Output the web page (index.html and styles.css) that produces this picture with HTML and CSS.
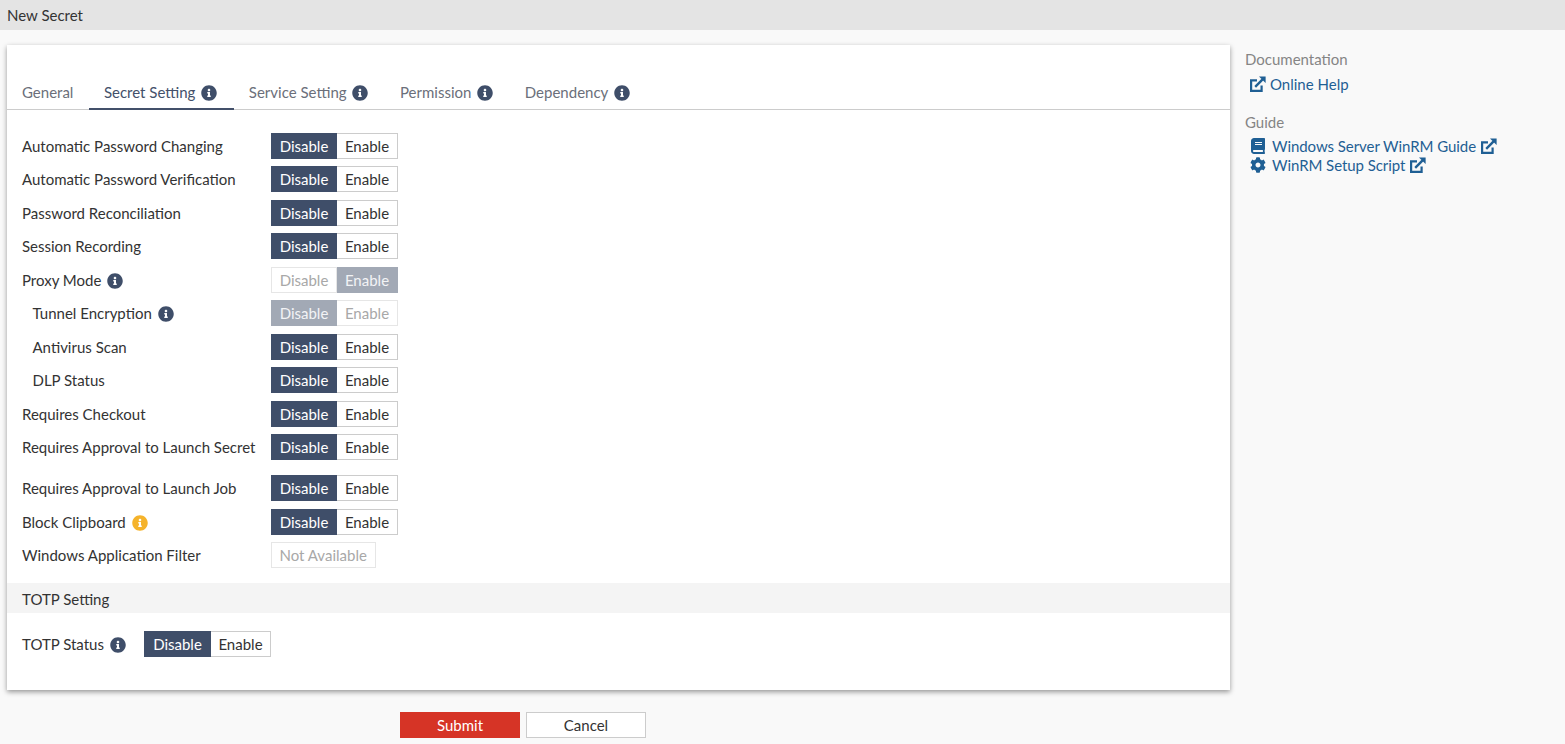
FILE: index.html
```html
<!DOCTYPE html>
<html lang="en">
<head>
    <meta charset="UTF-8">
    <title>New Secret</title>
    <link rel="stylesheet" href="styles.css">
</head>
<body>
    <svg class="icon-defs" aria-hidden="true">
        <symbol id="i-info" viewBox="0 0 512 512"><path d="M256 8C119.043 8 8 119.083 8 256c0 136.997 111.043 248 248 248s248-111.003 248-248C504 119.083 392.957 8 256 8zm0 110c23.196 0 42 18.804 42 42s-18.804 42-42 42-42-18.804-42-42 18.804-42 42-42zm56 254c0 6.627-5.373 12-12 12h-88c-6.627 0-12-5.373-12-12v-24c0-6.627 5.373-12 12-12h12v-64h-12c-6.627 0-12-5.373-12-12v-24c0-6.627 5.373-12 12-12h64c6.627 0 12 5.373 12 12v100h12c6.627 0 12 5.373 12 12v24z"/></symbol>
        <symbol id="i-ext" viewBox="0 0 16 16"><path d="M7 4.4H1.1v10.5h10.5V9.5" fill="none" stroke="currentColor" stroke-width="2.2"/><path d="M5.2 10.8L13.6 2.4" fill="none" stroke="currentColor" stroke-width="2.4"/><path d="M9 0.4h6.6V7z"/></symbol>
        <symbol id="i-book" viewBox="0 0 448 512"><path d="M448 360V24c0-13.3-10.7-24-24-24H96C43 0 0 43 0 96v320c0 53 43 96 96 96h328c13.3 0 24-10.7 24-24v-16c0-7.5-3.5-14.3-8.9-18.7-4.2-15.4-4.2-59.3 0-74.7 5.4-4.3 8.9-11.1 8.9-18.6zM128 134c0-3.3 2.7-6 6-6h212c3.3 0 6 2.7 6 6v20c0 3.3-2.7 6-6 6H134c-3.3 0-6-2.7-6-6v-20zm0 64c0-3.3 2.7-6 6-6h212c3.3 0 6 2.7 6 6v20c0 3.3-2.7 6-6 6H134c-3.3 0-6-2.7-6-6v-20zm253.4 250H96c-17.7 0-32-14.3-32-32 0-17.6 14.4-32 32-32h285.4c-1.9 17.1-1.9 46.9 0 64z"/></symbol>
        <symbol id="i-cog" viewBox="0 0 512 512"><path d="M487.4 315.7l-42.6-24.6c4.3-23.2 4.3-47 0-70.2l42.6-24.6c4.9-2.8 7.1-8.6 5.5-14-11.1-35.6-30-67.8-54.7-94.6-3.8-4.1-10-5.1-14.8-2.3L380.8 110c-17.9-15.4-38.5-27.3-60.8-35.1V25.8c0-5.6-3.9-10.5-9.4-11.7-36.7-8.2-74.3-7.8-109.2 0-5.5 1.2-9.4 6.1-9.4 11.7V75c-22.2 7.9-42.8 19.8-60.8 35.1L88.7 85.5c-4.9-2.8-11-1.9-14.8 2.3-24.7 26.7-43.6 58.9-54.7 94.6-1.7 5.4.6 11.2 5.5 14L67.3 221c-4.3 23.2-4.3 47 0 70.2l-42.6 24.6c-4.9 2.8-7.1 8.6-5.5 14 11.1 35.6 30 67.8 54.7 94.6 3.8 4.1 10 5.1 14.8 2.3l42.6-24.6c17.9 15.4 38.5 27.3 60.8 35.1v49.2c0 5.6 3.9 10.5 9.4 11.7 36.7 8.2 74.3 7.8 109.2 0 5.5-1.2 9.4-6.1 9.4-11.7v-49.2c22.2-7.9 42.8-19.8 60.8-35.1l42.6 24.6c4.9 2.8 11 1.9 14.8-2.3 24.7-26.7 43.6-58.9 54.7-94.6 1.5-5.5-.7-11.3-5.6-14.1zM256 336c-44.1 0-80-35.9-80-80s35.9-80 80-80 80 35.9 80 80-35.9 80-80 80z"/></symbol>
    </svg>

    <div class="title-bar">New Secret</div>

    <div class="page">
        <div class="main">
            <div class="card">
                <div class="tabs">
                    <div class="tab">General</div>
                    <div class="tab active">Secret Setting <svg class="info"><use href="#i-info"/></svg></div>
                    <div class="tab">Service Setting <svg class="info"><use href="#i-info"/></svg></div>
                    <div class="tab">Permission <svg class="info"><use href="#i-info"/></svg></div>
                    <div class="tab">Dependency <svg class="info"><use href="#i-info"/></svg></div>
                </div>

                <div class="form">
                    <div class="row">
                        <div class="label">Automatic Password Changing</div>
                        <div class="toggle"><span class="opt on">Disable</span><span class="opt">Enable</span></div>
                    </div>
                    <div class="row">
                        <div class="label">Automatic Password Verification</div>
                        <div class="toggle"><span class="opt on">Disable</span><span class="opt">Enable</span></div>
                    </div>
                    <div class="row">
                        <div class="label">Password Reconciliation</div>
                        <div class="toggle"><span class="opt on">Disable</span><span class="opt">Enable</span></div>
                    </div>
                    <div class="row">
                        <div class="label">Session Recording</div>
                        <div class="toggle"><span class="opt on">Disable</span><span class="opt">Enable</span></div>
                    </div>
                    <div class="row">
                        <div class="label">Proxy Mode <svg class="info"><use href="#i-info"/></svg></div>
                        <div class="toggle disabled"><span class="opt">Disable</span><span class="opt on">Enable</span></div>
                    </div>
                    <div class="row sub">
                        <div class="label">Tunnel Encryption <svg class="info"><use href="#i-info"/></svg></div>
                        <div class="toggle disabled"><span class="opt on">Disable</span><span class="opt">Enable</span></div>
                    </div>
                    <div class="row sub">
                        <div class="label">Antivirus Scan</div>
                        <div class="toggle"><span class="opt on">Disable</span><span class="opt">Enable</span></div>
                    </div>
                    <div class="row sub">
                        <div class="label">DLP Status</div>
                        <div class="toggle"><span class="opt on">Disable</span><span class="opt">Enable</span></div>
                    </div>
                    <div class="row">
                        <div class="label">Requires Checkout</div>
                        <div class="toggle"><span class="opt on">Disable</span><span class="opt">Enable</span></div>
                    </div>
                    <div class="row spaced">
                        <div class="label">Requires Approval to Launch Secret</div>
                        <div class="toggle"><span class="opt on">Disable</span><span class="opt">Enable</span></div>
                    </div>
                    <div class="row">
                        <div class="label">Requires Approval to Launch Job</div>
                        <div class="toggle"><span class="opt on">Disable</span><span class="opt">Enable</span></div>
                    </div>
                    <div class="row">
                        <div class="label">Block Clipboard <svg class="info warn"><use href="#i-info"/></svg></div>
                        <div class="toggle"><span class="opt on">Disable</span><span class="opt">Enable</span></div>
                    </div>
                    <div class="row">
                        <div class="label">Windows Application Filter</div>
                        <div class="na">Not Available</div>
                    </div>
                </div>

                <div class="section-head">TOTP Setting</div>

                <div class="form totp">
                    <div class="row">
                        <div class="label">TOTP Status <svg class="info"><use href="#i-info"/></svg></div>
                        <div class="toggle"><span class="opt on">Disable</span><span class="opt">Enable</span></div>
                    </div>
                </div>
            </div>

            <div class="actions">
                <button class="btn submit">Submit</button>
                <button class="btn cancel">Cancel</button>
            </div>
        </div>

        <div class="side">
            <div class="side-title">Documentation</div>
            <a class="help-link"><svg class="ext"><use href="#i-ext"/></svg>Online Help</a>

            <div class="side-title guide">Guide</div>
            <a class="guide-link"><svg class="lead"><use href="#i-book"/></svg>Windows Server WinRM Guide<svg class="ext"><use href="#i-ext"/></svg></a>
            <a class="guide-link"><svg class="lead"><use href="#i-cog"/></svg>WinRM Setup Script<svg class="ext"><use href="#i-ext"/></svg></a>
        </div>
    </div>
</body>
</html>
```

FILE: styles.css
```css
body {
    margin: 0;
    background: #f9f9f9;
    font-family: 'Lato', sans-serif;
    font-size: 15px;
    color: #333;
    overflow: hidden;
}

.icon-defs {
    display: none;
}

.title-bar {
    height: 30px;
    line-height: 30px;
    padding-left: 7px;
    background: #e4e4e4;
}

.page {
    display: flex;
    padding: 15px 0 0 7px;
}

.main {
    width: 1223px;
    flex-shrink: 0;
}

.card {
    height: 645px;
    background: #fff;
    box-shadow: 0 2px 5px rgba(0, 0, 0, 0.4);
}

/* Tabs */
.tabs {
    display: flex;
    height: 64px;
    align-items: flex-end;
    border-bottom: 1px solid #ccc;
}

.tab {
    height: 34px;
    line-height: 33px;
    padding: 0 15px;
    color: #6b6f7a;
    box-sizing: border-box;
    margin-bottom: -1px;
    white-space: nowrap;
}

.tab:first-child {
    padding-right: 15.5px;
}

.tab .info {
    margin-right: 1.6px;
}

.tab.active {
    color: #43506a;
    border-bottom: 2px solid #43506a;
}

.info {
    width: 16px;
    height: 16px;
    fill: #3f4e69;
    vertical-align: -3px;
    margin-left: 2px;
}

.info.warn {
    fill: #f5b32b;
}

/* Form rows */
.form {
    padding: 22.9px 15px 0;
}

.row {
    display: flex;
    align-items: center;
    height: 26px;
    margin-bottom: 7.5px;
}

.row.sub .label {
    padding-left: 10.5px;
    width: 238.5px;
}

.row.spaced {
    margin-bottom: 15px;
}

.label {
    width: 249px;
    flex-shrink: 0;
}

.toggle {
    display: flex;
    height: 26px;
}

.opt {
    box-sizing: border-box;
    height: 26px;
    line-height: 24px;
    width: 61px;
    text-align: center;
    background: #fff;
    border: 1px solid #ccc;
    border-left: none;
}

.opt:first-child {
    width: 66px;
    border-left: 1px solid #ccc;
}

.opt.on {
    background: #3f4e69;
    border-color: #3f4e69;
    color: #fff;
}

.toggle.disabled .opt {
    color: #a8a8a8;
    border-color: #e6e6e6;
}

.toggle.disabled .opt.on {
    background: #a2a9b5;
    border-color: #a2a9b5;
    color: #f2f3f5;
}

.na {
    box-sizing: border-box;
    height: 26px;
    line-height: 24px;
    padding: 0 7.5px;
    width: 105px;
    color: #a8a8a8;
    background: #fff;
    border: 1px solid #e6e6e6;
    white-space: nowrap;
}

.section-head {
    height: 30px;
    line-height: 32px;
    margin-top: 15px;
    padding-left: 15px;
    background: #f4f4f4;
}

.form.totp {
    padding-top: 18px;
}

.totp .label {
    width: 122px;
}

.totp .opt:first-child {
    width: 67px;
}

.totp .opt {
    width: 60px;
}

/* Buttons */
.actions {
    display: flex;
    gap: 6px;
    padding: 22px 0 0 393px;
}

.btn {
    box-sizing: border-box;
    width: 120px;
    height: 26px;
    padding: 0;
    font-family: 'Lato', sans-serif;
    font-size: 15px;
    border-radius: 0;
}

.submit {
    background: #d63426;
    border: none;
    color: #fff;
}

.cancel {
    background: #fff;
    border: 1px solid #ccc;
    color: #333;
}

/* Right side */
.side {
    padding-left: 15px;
    padding-top: 4px;
    flex: 1;
}

.side-title {
    color: #858585;
    height: 20px;
    line-height: 20px;
}

.side-title.guide {
    margin-top: 18px;
}

.help-link, .guide-link {
    display: flex;
    align-items: center;
    color: #1f5f94;
}

.help-link {
    height: 20px;
    margin-top: 5px;
    padding-left: 5px;
}

.guide-link {
    height: 19px;
    padding-left: 5px;
    letter-spacing: -0.06px;
}

.side-title.guide + .guide-link {
    margin-top: 4.5px;
}

.ext {
    width: 16px;
    height: 16px;
    margin-right: 4px;
    fill: currentColor;
}

.guide-link .ext {
    margin: 0 0 0 5px;
}

.lead {
    width: 16px;
    height: 16px;
    fill: #1f5f94;
    margin-right: 6px;
}
```
